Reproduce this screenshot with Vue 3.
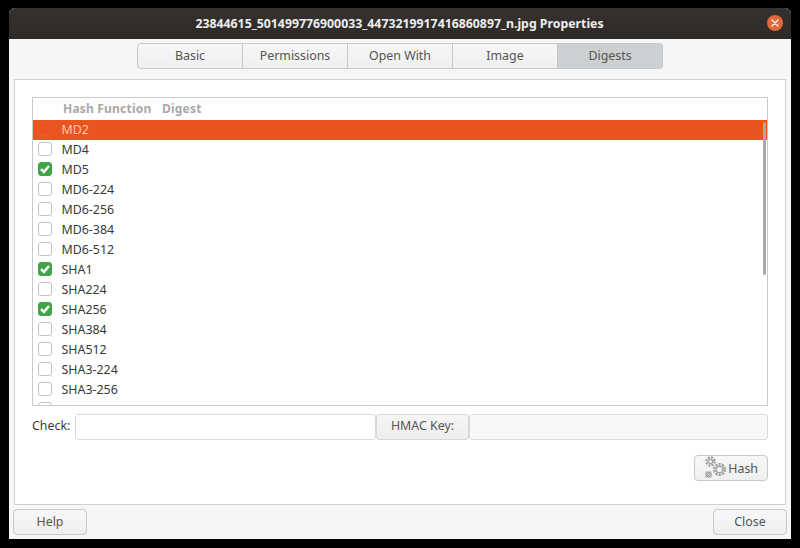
<script setup>
const tabs = ['Basic', 'Permissions', 'Open With', 'Image', 'Digests']
const rows = [
  ['MD2', false], ['MD4', false], ['MD5', true], ['MD6-224', false], ['MD6-256', false],
  ['MD6-384', false], ['MD6-512', false], ['SHA1', true], ['SHA224', false], ['SHA256', true],
  ['SHA384', false], ['SHA512', false], ['SHA3-224', false], ['SHA3-256', false], ['', false],
]
</script>

<template>
  <div class="window">
    <header class="titlebar">
      <span class="title">23844615_501499776900033_4473219917416860897_n.jpg Properties</span>
      <span class="close-x">
        <svg width="8" height="8" viewBox="0 0 8 8"><path d="M1 1l6 6M7 1l-6 6" stroke="#fbe3d8" stroke-width="1.6" stroke-linecap="round" /></svg>
      </span>
    </header>
    <nav class="tabs">
      <button v-for="t in tabs" :key="t" class="tab" :class="{ active: t === 'Digests' }">{{ t }}</button>
    </nav>
    <main class="frame">
      <section class="tree">
        <div class="thead">
          <span class="th th-fn">Hash Function</span>
          <span class="th">Digest</span>
        </div>
        <div class="rows">
          <div v-for="(r, i) in rows" :key="i" class="row" :class="{ selected: i === 0 }">
            <span class="check" :class="{ on: r[1] }">
              <svg v-if="r[1]" width="12" height="12" viewBox="0 0 12 12"><path d="M2 6.2l2.9 2.7L10 3" fill="none" stroke="#fff" stroke-width="2.4" /></svg>
            </span>
            <span class="name">{{ r[0] }}</span>
          </div>
        </div>
        <div class="scroll"></div>
      </section>
      <div class="check-row">
        <label class="lbl">Check:</label>
        <div class="entry check-entry"></div>
        <button class="hmac">HMAC Key:</button>
        <div class="entry hmac-entry"></div>
      </div>
      <div class="hash-row">
        <button class="btn hash">
          <svg width="24" height="24" viewBox="0 0 24 24" class="gears">
            <g fill="none" stroke="#a4a4a1">
              <circle cx="6.5" cy="5.5" r="4" stroke-width="2.6" stroke-dasharray="2 1.14" />
              <circle cx="6.5" cy="5.5" r="2.2" stroke-width="1.2" />
              <circle cx="15.5" cy="13.5" r="5.2" stroke-width="2.8" stroke-dasharray="2.2 1.07" />
              <circle cx="15.5" cy="13.5" r="3.2" stroke-width="1.2" />
            </g>
            <rect x="1.5" y="15.5" width="6" height="6" fill="#a3a3a0" />
            <path d="M2.5 16.5l4 4M6.5 16.5l-4 4" stroke="#dcdcda" stroke-width=".8" />
          </svg>
          <span>Hash</span>
        </button>
      </div>
    </main>
    <footer class="footer">
      <button class="btn wide">Help</button>
      <button class="btn wide">Close</button>
    </footer>
  </div>
</template>

<style>
html, body { margin: 0; background: #000; }
</style>

<style scoped>
.window {
  box-sizing: border-box;
  width: 782px;
  height: 531px;
  margin: 8px 0 0 9px;
  background: #f5f6f7;
  border-radius: 6px 6px 0 0;
  overflow: hidden;
  display: flex;
  flex-direction: column;
  font-family: "Noto Sans", "Open Sans", sans-serif;
  font-size: 12.4px;
  color: #3d3d3a;
}
.titlebar {
  height: 31px;
  flex: none;
  background: linear-gradient(#353230, #2c2927);
  display: flex;
  align-items: center;
  justify-content: center;
  position: relative;
}
.title {
  color: #eeeeec;
  font-weight: 700;
  font-size: 12.3px;
  margin-right: 1px;
}
.close-x {
  position: absolute;
  right: 8px;
  top: 7px;
  width: 16px;
  height: 16px;
  border-radius: 50%;
  background: #e0683a;
  display: flex;
  align-items: center;
  justify-content: center;
}
.tabs {
  flex: none;
  display: flex;
  justify-content: center;
  margin-top: 4px;
  height: 26px;
}
button {
  font: inherit;
  color: #555552;
  padding: 0 0 2px;
  margin: 0;
}
.tab {
  box-sizing: border-box;
  width: 105px;
  height: 26px;
  border: 1px solid #cdc7c2;
  border-left-width: 0;
  background: linear-gradient(#f7f7f7, #eeeff0);
}
.tab:first-child {
  width: 106px;
  border-left-width: 1px;
  border-radius: 4px 0 0 4px;
}
.tab:last-child {
  border-radius: 0 4px 4px 0;
}
.tab.active {
  background: #cdd0d3;
  border-color: #c6c9cc;
}
.frame {
  box-sizing: border-box;
  flex: none;
  width: 772px;
  height: 426px;
  margin: 10px 0 0 5px;
  background: #fff;
  border: 1px solid #cfd0d0;
  padding: 17px 17px 0;
  display: flex;
  flex-direction: column;
}
.tree {
  box-sizing: border-box;
  height: 309px;
  flex: none;
  border: 1px solid #c9cacb;
  position: relative;
  overflow: hidden;
}
.thead {
  box-sizing: border-box;
  height: 22px;
  padding: 0 0 2px 30px;
  display: flex;
  align-items: center;
  font-weight: 700;
  color: #a7a8a9;
  font-size: 12px;
  letter-spacing: .2px;
}
.th-fn {
  width: 99px;
}
.row {
  box-sizing: border-box;
  height: 20px;
  padding: 0 0 2px 5px;
  display: flex;
  align-items: center;
  color: #3a3a38;
}
.row.selected {
  background: #e95420;
  color: #f7c9b5;
}
.check {
  box-sizing: border-box;
  width: 14px;
  height: 14px;
  border: 1px solid #c3c3c1;
  border-radius: 3px;
  background: #fff;
  display: flex;
  align-items: center;
  justify-content: center;
  flex: none;
}
.row.selected .check {
  background: #e95420;
  border-color: #e2602f;
}
.check.on {
  background: #3fa648;
  border-color: #3fa648;
}
.name {
  margin-left: 9.5px;
}
.scroll {
  position: absolute;
  right: 1px;
  top: 24px;
  width: 3px;
  height: 153px;
  background: #a9a9a9;
  border-radius: 2px;
}
.check-row {
  display: flex;
  align-items: center;
  height: 27px;
  margin-top: 7px;
  flex: none;
}
.lbl {
  width: 43px;
  flex: none;
  color: #3a3a38;
  padding-bottom: 2px;
}
.entry {
  box-sizing: border-box;
  height: 26px;
  border: 1px solid #dadbdb;
  border-radius: 3px;
}
.check-entry {
  width: 301px;
  background: #fff;
}
.hmac {
  box-sizing: border-box;
  width: 93px;
  height: 26px;
  border: 1px solid #d8d8d6;
  border-radius: 3px;
  background: linear-gradient(#f6f6f6, #eceded);
}
.hmac-entry {
  width: 299px;
  background: #f7f8f8;
}
.hash-row {
  display: flex;
  justify-content: flex-end;
  margin-top: 15px;
}
.btn {
  box-sizing: border-box;
  height: 26px;
  border: 1px solid #cdc7c2;
  border-radius: 4px;
  background: linear-gradient(#f7f7f7, #eeeff0);
}
.hash {
  width: 74px;
  display: flex;
  align-items: center;
  justify-content: space-between;
  padding: 0 9px 0 9px;
  overflow: visible;
}
.footer {
  flex: none;
  display: flex;
  justify-content: space-between;
  padding: 4px 4px 0;
}
.wide {
  width: 74px;
}
</style>
